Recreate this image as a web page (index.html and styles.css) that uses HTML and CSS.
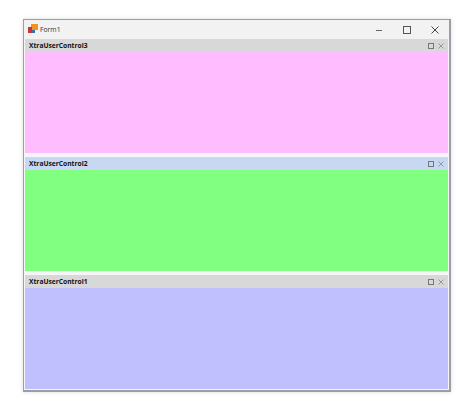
FILE: index.html
```html
<!DOCTYPE html>
<html lang="en">
<head>
<meta charset="utf-8">
<title>Form1</title>
<link rel="stylesheet" href="styles.css">
</head>
<body>
<div class="window">
  <div class="titlebar">
    <svg class="logo" width="11" height="11" viewBox="0 0 11 11"><rect x="3" y="0" width="7" height="6" fill="#f59320"/><rect x="0" y="3" width="4" height="6" fill="#c8372d"/><rect x="4" y="6" width="3" height="3" fill="#3a6ea5"/></svg>
    <span class="title">Form1</span>
    <div class="controls">
      <svg width="8" height="8" viewBox="0 0 8 8"><path d="M1 4.5h6" stroke="#666" fill="none"/></svg>
      <svg width="8" height="8" viewBox="0 0 8 8"><rect x=".5" y=".5" width="7" height="7" stroke="#555" fill="none"/></svg>
      <svg width="8" height="8" viewBox="0 0 8 8"><path d="M.5.5l7 7M7.5.5l-7 7" stroke="#444" fill="none"/></svg>
    </div>
  </div>
  <div class="stack">
    <section class="panel">
      <div class="head gray"><b>XtraUserControl3</b><span class="tools"><svg width="6" height="6" viewBox="0 0 6 6"><rect x=".5" y=".5" width="5" height="5" stroke="#777" fill="none"/></svg><svg width="6" height="6" viewBox="0 0 6 6"><path d="M.5.5l5 5M5.5.5l-5 5" stroke="#999" fill="none"/></svg></span></div>
      <div class="body pink"></div>
    </section>
    <section class="panel">
      <div class="head blue"><b>XtraUserControl2</b><span class="tools"><svg width="6" height="6" viewBox="0 0 6 6"><rect x=".5" y=".5" width="5" height="5" stroke="#777" fill="none"/></svg><svg width="6" height="6" viewBox="0 0 6 6"><path d="M.5.5l5 5M5.5.5l-5 5" stroke="#999" fill="none"/></svg></span></div>
      <div class="body green"></div>
    </section>
    <section class="panel">
      <div class="head gray"><b>XtraUserControl1</b><span class="tools"><svg width="6" height="6" viewBox="0 0 6 6"><rect x=".5" y=".5" width="5" height="5" stroke="#777" fill="none"/></svg><svg width="6" height="6" viewBox="0 0 6 6"><path d="M.5.5l5 5M5.5.5l-5 5" stroke="#999" fill="none"/></svg></span></div>
      <div class="body lilac"></div>
    </section>
  </div>
</div>
</body>
</html>
```
FILE: styles.css
```css
html, body { margin: 0; padding: 0; background: #fff; }
body { width: 474px; height: 415px; overflow: hidden; font-family: "Open Sans", "Liberation Sans", sans-serif; }
.window {
  box-sizing: border-box;
  width: 428px;
  height: 373px;
  margin: 19px 0 0 23px;
  border: 1px solid #9a9fa6;
  border-width: 1px 2px 2px 1px;
  background: #f2f2f2;
  box-shadow: 0 0 4px rgba(140,140,140,.3);
  display: flex;
  flex-direction: column;
}
.titlebar { height: 19px; display: flex; align-items: center; padding-left: 4px; background: #f2f2f2; }
.logo { flex: none; }
.title { margin-left: 1px; font-size: 6.8px; color: #333; }
.controls { margin-left: auto; display: flex; align-items: center; gap: 20px; padding-right: 10px; }
.stack { display: flex; flex-direction: column; gap: 4px; background: #f6f6f8; padding: 0 1px 1px; }
.head { height: 13px; display: flex; align-items: center; padding: 0 4px; font-size: 6.7px; color: #111; }
.head b { font-weight: 700; }
.gray { background: #d8d8d8; }
.blue { background: #c8d8f2; }
.tools { margin-left: auto; display: flex; align-items: center; gap: 4px; }
.body { height: 101px; }
.pink { background: #ffbdff; }
.green { background: #80ff80; }
.lilac { background: #c0c0ff; }
```
